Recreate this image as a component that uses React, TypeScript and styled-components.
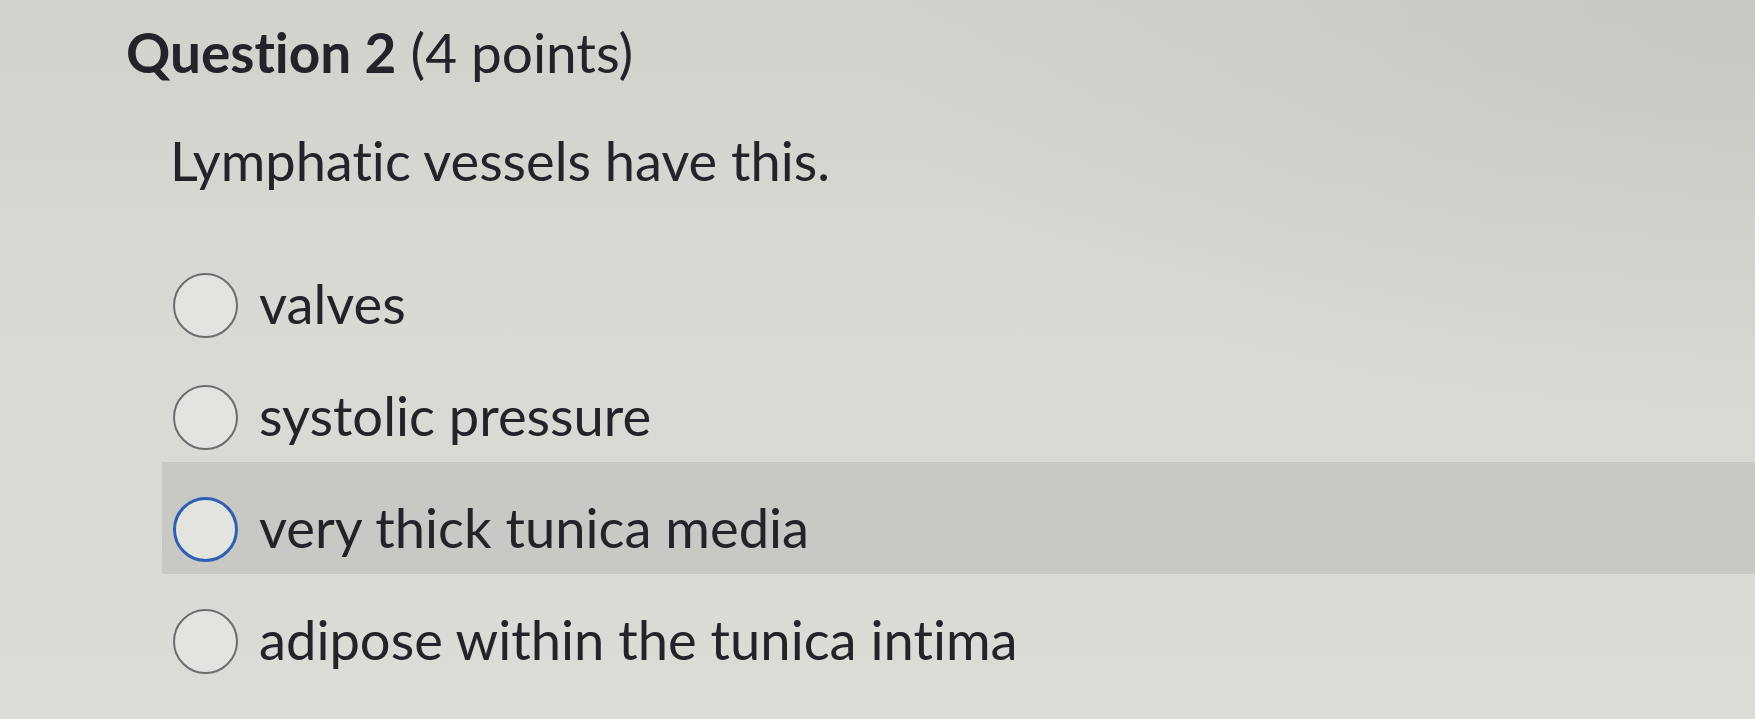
import React from "react";
import styled, { createGlobalStyle } from "styled-components";

const GlobalStyle = createGlobalStyle`
  html, body {
    margin: 0;
    padding: 0;
  }
  body {
    width: 1755px;
    height: 719px;
    overflow: hidden;
    background:
      radial-gradient(ellipse 900px 420px at 100% 0%, rgba(196, 196, 192, 0.8), rgba(196, 196, 192, 0) 100%),
      linear-gradient(to bottom, #d2d2cd 0%, #d9d9d4 40%, #dcdcd7 100%);
    font-family: Lato, "Noto Sans", sans-serif;
    font-variant-ligatures: none;
    color: #24232a;
  }
`;

const Page = styled.main`
  display: flex;
  flex-direction: column;
  padding-top: 18px;
`;

const Title = styled.h2`
  margin: 0 0 0 126px;
  font-size: 54.9px;
  line-height: 68px;
  font-weight: 400;
`;

const Strong = styled.span`
  font-weight: 700;
`;

const QuestionText = styled.p`
  margin: 41px 0 0 170px;
  font-size: 54.2px;
  line-height: 68px;
`;

const OptionList = styled.div`
  display: flex;
  flex-direction: column;
  margin: 43px 0 0 162px;
`;

const OptionRow = styled.label<{ $hover?: boolean }>`
  display: flex;
  align-items: flex-start;
  gap: 21px;
  height: 112px;
  padding-left: 11px;
  box-sizing: border-box;
  background: ${(p) => (p.$hover ? "#c8c8c5" : "transparent")};
`;

const Radio = styled.span<{ $focus?: boolean }>`
  flex: none;
  width: 65px;
  height: 65px;
  margin-top: 35px;
  box-sizing: border-box;
  border-radius: 50%;
  border: ${(p) => (p.$focus ? "3.5px solid #2e5fb2" : "2.5px solid #6c6b6e")};
  background: #e3e3e0;
`;

const OptionText = styled.span`
  font-size: 54.3px;
  line-height: 68px;
  margin-top: 31px;
`;

const options = [
  "valves",
  "systolic pressure",
  "very thick tunica media",
  "adipose within the tunica intima",
];

export default function App() {
  return (
    <>
      <GlobalStyle />
      <Page>
        <Title>
          <Strong>Question 2</Strong> (4 points)
        </Title>
        <QuestionText>Lymphatic vessels have this.</QuestionText>
        <OptionList>
          {options.map((o, i) => (
            <OptionRow key={o} $hover={i === 2}>
              <Radio $focus={i === 2} />
              <OptionText>{o}</OptionText>
            </OptionRow>
          ))}
        </OptionList>
      </Page>
    </>
  );
}
